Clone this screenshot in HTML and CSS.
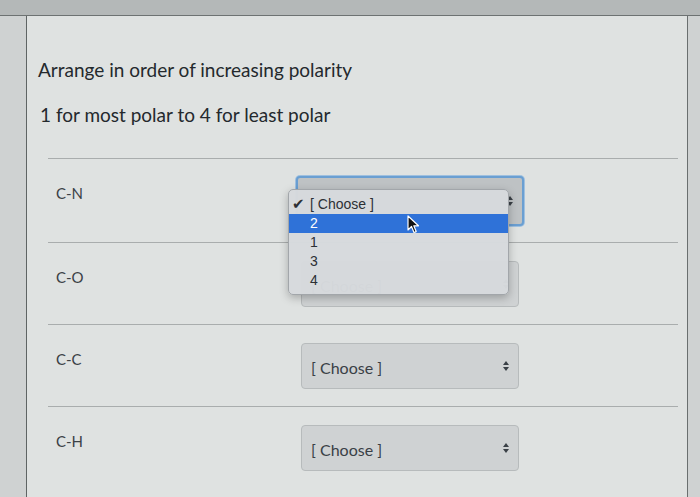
FILE: index.html
```html
<!DOCTYPE html>
<html>
<head>
<meta charset="utf-8">
<link rel="stylesheet" href="styles.css">
</head>
<body>
<div class="topbar"></div>
<div class="panel">
  <div class="question">
    <p class="title">Arrange in order of increasing polarity</p>
    <p class="sub">1 for most polar to 4 for least polar</p>
  </div>
  <div class="rows">
    <div class="row">
      <div class="label">C-N</div>
      <div class="select focused">
        <span class="value"></span>
        <span class="arrows"><span class="up"></span><span class="down"></span></span>
        <div class="menu">
          <div class="item checked"><span class="check">✔</span>[ Choose ]</div>
          <div class="item active">2<svg class="cursor" width="13" height="19" viewBox="0 0 13 19"><path d="M1 1 L1 15 L4.5 11.5 L7 17.5 L9.2 16.6 L6.8 10.8 L11.5 10.8 Z" fill="#111" stroke="#fff" stroke-width="1.2" stroke-linejoin="round"/></svg></div>
          <div class="item">1</div>
          <div class="item">3</div>
          <div class="item">4</div>
        </div>
      </div>
    </div>
    <div class="row">
      <div class="label">C-O</div>
      <div class="select">
        <span class="value">[ Choose ]</span>
        <span class="arrows"><span class="up"></span><span class="down"></span></span>
      </div>
    </div>
    <div class="row">
      <div class="label">C-C</div>
      <div class="select">
        <span class="value">[ Choose ]</span>
        <span class="arrows"><span class="up"></span><span class="down"></span></span>
      </div>
    </div>
    <div class="row">
      <div class="label">C-H</div>
      <div class="select">
        <span class="value">[ Choose ]</span>
        <span class="arrows"><span class="up"></span><span class="down"></span></span>
      </div>
    </div>
  </div>
</div>
</body>
</html>
```

FILE: styles.css
```css
html, body {
  margin: 0;
  padding: 0;
  height: 100%;
}
body {
  background: #cfd2d2;
  font-family: Lato, "Open Sans", sans-serif;
  color: #2b3035;
  overflow: hidden;
}
.topbar {
  height: 15px;
  background: #b4b8b8;
  border-bottom: 1px solid #6d7272;
}
.panel {
  margin-left: 26px;
  width: 662px;
  height: 481px;
  background: #dfe2e1;
  border-left: 1px solid #5f6464;
  border-right: 1px solid #6a6f6f;
  box-sizing: border-box;
}
.question {
  padding: 42px 0 0 11px;
}
.title {
  margin: 0;
  font-size: 19px;
  line-height: 24px;
  color: #24292d;
}
.sub {
  margin: 21px 0 0 2px;
  font-size: 19px;
  line-height: 24px;
  color: #24292d;
}
.rows {
  margin: 31px 0 0 21px;
  width: 630px;
}
.row {
  box-sizing: border-box;
  height: 82px;
  border-top: 1px solid #a9adad;
  display: grid;
  grid-template-columns: 253px 218px;
  align-items: start;
}
.row:first-child {
  height: 84px;
}
.label {
  padding: 24px 0 0 8px;
  font-size: 15px;
  line-height: 20px;
  color: #3b4146;
}
.select {
  position: relative;
  margin-top: 18px;
  height: 46px;
  background: #cfd2d3;
  border: 1px solid #b7bbbc;
  border-radius: 4px;
  box-sizing: border-box;
  display: flex;
  align-items: center;
  justify-content: space-between;
  padding: 0 9px 0 9px;
}
.value {
  font-size: 16px;
  color: #3a4046;
  padding-top: 2px;
}
.arrows {
  display: flex;
  flex-direction: column;
  gap: 2px;
}
.up, .down {
  width: 0;
  height: 0;
  border-left: 3.5px solid transparent;
  border-right: 3.5px solid transparent;
}
.up { border-bottom: 4px solid #3a4046; }
.down { border-top: 4px solid #3a4046; }
.select.focused {
  margin-left: -5px;
  width: 228px;
  height: 50px;
  margin-top: 17px;
  background: #bec2c4;
  border: 2px solid #6a9fd2;
  box-shadow: 0 0 0 1px #9fc0df;
}
.menu {
  position: absolute;
  left: -10px;
  top: 11px;
  width: 221px;
  height: 106px;
  box-sizing: border-box;
  padding-top: 5px;
  background: rgba(214, 217, 220, 0.98);
  border: 1px solid #a2a6aa;
  border-radius: 5px;
  box-shadow: 0 3px 8px rgba(0, 0, 0, 0.25);
  font-family: "Liberation Sans", Arial, sans-serif;
  font-size: 14px;
  color: #2c3035;
  z-index: 2;
}
.item {
  position: relative;
  height: 19px;
  line-height: 19px;
  padding-left: 21px;
}
.item.active {
  background: #2f72d8;
  color: #ffffff;
}
.check {
  position: absolute;
  left: 3px;
  top: 0;
  font-family: "DejaVu Sans", sans-serif;
  font-size: 15px;
  color: #2c3035;
}
.cursor {
  position: absolute;
  left: 118px;
  top: 1px;
}
```
